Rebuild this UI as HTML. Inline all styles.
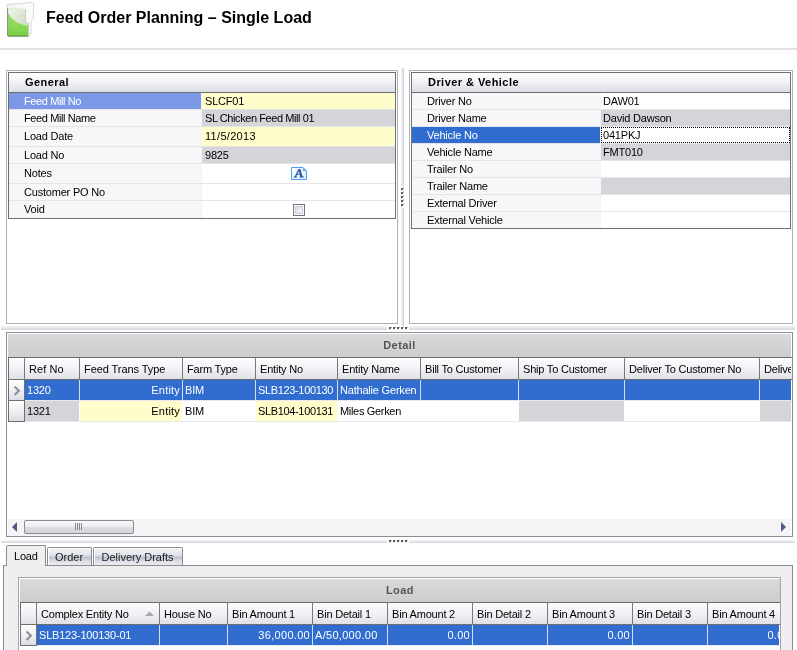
<!DOCTYPE html>
<html><head><meta charset="utf-8"><style>
html,body{margin:0;padding:0}
body{width:797px;height:650px;overflow:hidden;position:relative;background:#fff;font-family:"Liberation Sans",sans-serif;font-size:11px}
body>div{position:absolute}
.t{position:absolute;white-space:nowrap;letter-spacing:-0.2px;will-change:transform}
</style></head><body>
<svg style="position:absolute;left:0px;top:0px" width="40" height="40" viewBox="0 0 40 40">
<defs>
<linearGradient id="pg" x1="0" y1="0" x2="1" y2="0"><stop offset="0" stop-color="#f2f2f2"/><stop offset="1" stop-color="#fcfcfc"/></linearGradient>
<linearGradient id="gg" x1="0" y1="0" x2="0" y2="1"><stop offset="0" stop-color="#a4e070"/><stop offset="0.6" stop-color="#8cd858"/><stop offset="1" stop-color="#7ccc44"/></linearGradient>
<linearGradient id="sg" x1="0" y1="0" x2="1" y2="1"><stop offset="0" stop-color="#eef2ea"/><stop offset="1" stop-color="#cedcc4"/></linearGradient>
</defs>
<path d="M7 4.5 L32 2.5 L33.5 3.5 L33.5 18.5 L31 21 L31 34 L29 36 L8 36 Z" fill="url(#pg)" stroke="#d4d4d4" stroke-width="0.9"/>
<path d="M7.5 8.5 L25.5 9 L26 22.5 L28.5 23.5 L28.5 35.5 L27.5 36.5 L8.5 36.5 L7.5 35.5 Z" fill="url(#gg)"/>
<path d="M8 8.6 L25.5 9 L26 22.5 L28.5 23.5 L28.5 25.5 C20 25 12 21 9 14 L8 14 Z" fill="url(#sg)"/>
<path d="M8 35 L28.5 35 L28 36.5 L8.5 36.5 Z" fill="#5eae2c" opacity="0.8"/>
<path d="M7.6 8.5 L7.6 36" stroke="#8c8c8c" stroke-width="1"/>
<path d="M8 36.6 L28 36.6" stroke="#9a9a9a" stroke-width="0.8"/>
<path d="M25.6 9 L25.8 22.5 L28.6 23.5 L28.6 36" stroke="#c8c8c8" stroke-width="0.6" fill="none"/>
</svg>
<div class="t" style="left:46px;top:8px;height:20px;line-height:20px;text-align:left;font-weight:bold;font-size:16px;letter-spacing:0px;color:#000">Feed Order Planning – Single Load</div>
<div style="left:0px;top:48px;width:797px;height:2px;background:#e2e0e2"></div>
<div style="left:6px;top:70px;width:392px;height:1px;background:#b0afb2"></div>
<div style="left:6px;top:323px;width:392px;height:1px;background:#b0afb2"></div>
<div style="left:6px;top:70px;width:1px;height:254px;background:#b0afb2"></div>
<div style="left:397px;top:70px;width:1px;height:254px;background:#b0afb2"></div>
<div style="left:8px;top:72px;width:388px;height:1px;background:#6e6e70"></div>
<div style="left:8px;top:218px;width:388px;height:1px;background:#6e6e70"></div>
<div style="left:8px;top:72px;width:1px;height:147px;background:#6e6e70"></div>
<div style="left:395px;top:72px;width:1px;height:147px;background:#6e6e70"></div>
<div style="left:9px;top:73px;width:386px;height:19px;background:linear-gradient(#fefeff,#f4f4f8 40%,#dcdce5)"></div>
<div style="left:9px;top:92px;width:386px;height:1px;background:#6e6e70"></div>
<div class="t" style="left:25px;top:73px;height:19px;line-height:19px;text-align:left;font-weight:bold;color:#000;letter-spacing:0.45px">General</div>
<div style="left:9px;top:93px;width:192px;height:16px;background:#7a98e6"></div>
<div class="t" style="left:24px;top:93px;height:16px;line-height:16px;text-align:left;color:#fff;letter-spacing:-0.4px">Feed Mill No</div>
<div style="left:201px;top:93px;width:1px;height:16px;background:#f4f3f6"></div>
<div style="left:202px;top:93px;width:193px;height:16px;background:#fffdc9"></div>
<div class="t" style="left:205px;top:93px;height:16px;line-height:16px;text-align:left;color:#000;">SLCF01</div>
<div style="left:9px;top:109px;width:386px;height:1px;background:#e6e4e9"></div>
<div style="left:9px;top:110px;width:192px;height:16px;background:#f7f6f9"></div>
<div class="t" style="left:24px;top:110px;height:16px;line-height:16px;text-align:left;color:#000;letter-spacing:-0.4px">Feed Mill Name</div>
<div style="left:201px;top:110px;width:1px;height:16px;background:#f4f3f6"></div>
<div style="left:202px;top:110px;width:193px;height:16px;background:#d5d4d8"></div>
<div class="t" style="left:205px;top:110px;height:16px;line-height:16px;text-align:left;color:#000;;letter-spacing:-0.42px">SL Chicken Feed Mill 01</div>
<div style="left:9px;top:126px;width:386px;height:1px;background:#e6e4e9"></div>
<div style="left:9px;top:127px;width:192px;height:19px;background:#f7f6f9"></div>
<div class="t" style="left:24px;top:127px;height:19px;line-height:19px;text-align:left;color:#000">Load Date</div>
<div style="left:201px;top:127px;width:1px;height:19px;background:#f4f3f6"></div>
<div style="left:202px;top:127px;width:193px;height:19px;background:#fffdc9"></div>
<div class="t" style="left:205px;top:127px;height:19px;line-height:19px;text-align:left;color:#000;;letter-spacing:0.3px">11/5/2013</div>
<div style="left:9px;top:146px;width:386px;height:1px;background:#e6e4e9"></div>
<div style="left:9px;top:147px;width:192px;height:16px;background:#f7f6f9"></div>
<div class="t" style="left:24px;top:147px;height:16px;line-height:16px;text-align:left;color:#000">Load No</div>
<div style="left:201px;top:147px;width:1px;height:16px;background:#f4f3f6"></div>
<div style="left:202px;top:147px;width:193px;height:16px;background:#d5d4d8"></div>
<div class="t" style="left:205px;top:147px;height:16px;line-height:16px;text-align:left;color:#000;">9825</div>
<div style="left:9px;top:163px;width:386px;height:1px;background:#e6e4e9"></div>
<div style="left:9px;top:164px;width:192px;height:19px;background:#f7f6f9"></div>
<div class="t" style="left:24px;top:164px;height:19px;line-height:19px;text-align:left;color:#000">Notes</div>
<div style="left:201px;top:164px;width:1px;height:19px;background:#f4f3f6"></div>
<div style="left:202px;top:164px;width:193px;height:19px;background:#ffffff"></div>
<div style="left:9px;top:183px;width:386px;height:1px;background:#e6e4e9"></div>
<div style="left:9px;top:184px;width:192px;height:16px;background:#f7f6f9"></div>
<div class="t" style="left:24px;top:184px;height:16px;line-height:16px;text-align:left;color:#000">Customer PO No</div>
<div style="left:201px;top:184px;width:1px;height:16px;background:#f4f3f6"></div>
<div style="left:202px;top:184px;width:193px;height:16px;background:#ffffff"></div>
<div style="left:9px;top:200px;width:386px;height:1px;background:#e6e4e9"></div>
<div style="left:9px;top:201px;width:192px;height:17px;background:#f7f6f9"></div>
<div class="t" style="left:24px;top:201px;height:17px;line-height:17px;text-align:left;color:#000">Void</div>
<div style="left:201px;top:201px;width:1px;height:17px;background:#f4f3f6"></div>
<div style="left:202px;top:201px;width:193px;height:17px;background:#ffffff"></div>
<svg style="position:absolute;left:291px;top:167px" width="16" height="13" viewBox="0 0 16 13" shape-rendering="geometricPrecision">
<defs><linearGradient id="ai" x1="0" y1="0" x2="1" y2="1"><stop offset="0" stop-color="#ffffff"/><stop offset="1" stop-color="#dfeafa"/></linearGradient></defs>
<path d="M0.5 0.5 H12 L15.5 4 V12.5 H0.5 Z" fill="url(#ai)" stroke="#4f9ef5" stroke-width="1"/>
<path d="M12 0.5 L15.5 4 H12 Z" fill="#58a4f6"/>
<path d="M7.6 2 H9.4 L11.6 10 H9.2 Z" fill="#1f50a2"/>
<path d="M7.9 2.6 L4.2 10" stroke="#2a5aaa" stroke-width="1.3"/>
<path d="M5.6 7.3 H10.2" stroke="#3a66b0" stroke-width="1"/>
<path d="M2.6 9.6 H6 V10.6 H2.6 Z M8.8 9.6 H12.8 V10.6 H8.8 Z" fill="#1f50a2"/>
</svg>
<div style="left:293px;top:204px;width:12px;height:1px;background:#747474"></div>
<div style="left:293px;top:215px;width:12px;height:1px;background:#747474"></div>
<div style="left:293px;top:204px;width:1px;height:12px;background:#747474"></div>
<div style="left:304px;top:204px;width:1px;height:12px;background:#747474"></div>
<div style="left:294px;top:205px;width:10px;height:10px;background:#fff"></div>
<div style="left:295px;top:206px;width:8px;height:8px;border:1px solid #c4cade;box-sizing:border-box;background:linear-gradient(135deg,#dcdeea,#f8f6fa)"></div>
<div style="left:409px;top:70px;width:384px;height:1px;background:#b0afb2"></div>
<div style="left:409px;top:323px;width:384px;height:1px;background:#b0afb2"></div>
<div style="left:409px;top:70px;width:1px;height:254px;background:#b0afb2"></div>
<div style="left:792px;top:70px;width:1px;height:254px;background:#b0afb2"></div>
<div style="left:411px;top:72px;width:380px;height:1px;background:#6e6e70"></div>
<div style="left:411px;top:228px;width:380px;height:1px;background:#6e6e70"></div>
<div style="left:411px;top:72px;width:1px;height:157px;background:#6e6e70"></div>
<div style="left:790px;top:72px;width:1px;height:157px;background:#6e6e70"></div>
<div style="left:412px;top:73px;width:378px;height:19px;background:linear-gradient(#fefeff,#f4f4f8 40%,#dcdce5)"></div>
<div style="left:412px;top:92px;width:378px;height:1px;background:#6e6e70"></div>
<div class="t" style="left:428px;top:73px;height:19px;line-height:19px;text-align:left;font-weight:bold;color:#000;letter-spacing:0.45px">Driver & Vehicle</div>
<div style="left:412px;top:93px;width:188px;height:16px;background:#f7f6f9"></div>
<div class="t" style="left:427px;top:93px;height:16px;line-height:16px;text-align:left;color:#000">Driver No</div>
<div style="left:600px;top:93px;width:1px;height:16px;background:#f4f3f6"></div>
<div style="left:601px;top:93px;width:189px;height:16px;background:#ffffff"></div>
<div class="t" style="left:603px;top:93px;height:16px;line-height:16px;text-align:left;color:#000;">DAW01</div>
<div style="left:412px;top:109px;width:378px;height:1px;background:#e6e4e9"></div>
<div style="left:412px;top:110px;width:188px;height:16px;background:#f7f6f9"></div>
<div class="t" style="left:427px;top:110px;height:16px;line-height:16px;text-align:left;color:#000">Driver Name</div>
<div style="left:600px;top:110px;width:1px;height:16px;background:#f4f3f6"></div>
<div style="left:601px;top:110px;width:189px;height:16px;background:#d5d4d8"></div>
<div class="t" style="left:603px;top:110px;height:16px;line-height:16px;text-align:left;color:#000;">David Dawson</div>
<div style="left:412px;top:126px;width:378px;height:1px;background:#e6e4e9"></div>
<div style="left:412px;top:127px;width:188px;height:16px;background:#316dcf"></div>
<div class="t" style="left:427px;top:127px;height:16px;line-height:16px;text-align:left;color:#fff">Vehicle No</div>
<div style="left:600px;top:127px;width:1px;height:16px;background:#f4f3f6"></div>
<div style="left:601px;top:127px;width:189px;height:16px;background:#ffffff"></div>
<div class="t" style="left:603px;top:127px;height:16px;line-height:16px;text-align:left;color:#000;">041PKJ</div>
<div style="left:412px;top:143px;width:378px;height:1px;background:#e6e4e9"></div>
<div style="left:412px;top:144px;width:188px;height:16px;background:#f7f6f9"></div>
<div class="t" style="left:427px;top:144px;height:16px;line-height:16px;text-align:left;color:#000">Vehicle Name</div>
<div style="left:600px;top:144px;width:1px;height:16px;background:#f4f3f6"></div>
<div style="left:601px;top:144px;width:189px;height:16px;background:#d5d4d8"></div>
<div class="t" style="left:603px;top:144px;height:16px;line-height:16px;text-align:left;color:#000;">FMT010</div>
<div style="left:412px;top:160px;width:378px;height:1px;background:#e6e4e9"></div>
<div style="left:412px;top:161px;width:188px;height:16px;background:#f7f6f9"></div>
<div class="t" style="left:427px;top:161px;height:16px;line-height:16px;text-align:left;color:#000">Trailer No</div>
<div style="left:600px;top:161px;width:1px;height:16px;background:#f4f3f6"></div>
<div style="left:601px;top:161px;width:189px;height:16px;background:#ffffff"></div>
<div style="left:412px;top:177px;width:378px;height:1px;background:#e6e4e9"></div>
<div style="left:412px;top:178px;width:188px;height:16px;background:#f7f6f9"></div>
<div class="t" style="left:427px;top:178px;height:16px;line-height:16px;text-align:left;color:#000">Trailer Name</div>
<div style="left:600px;top:178px;width:1px;height:16px;background:#f4f3f6"></div>
<div style="left:601px;top:178px;width:189px;height:16px;background:#d5d4d8"></div>
<div style="left:412px;top:194px;width:378px;height:1px;background:#e6e4e9"></div>
<div style="left:412px;top:195px;width:188px;height:16px;background:#f7f6f9"></div>
<div class="t" style="left:427px;top:195px;height:16px;line-height:16px;text-align:left;color:#000">External Driver</div>
<div style="left:600px;top:195px;width:1px;height:16px;background:#f4f3f6"></div>
<div style="left:601px;top:195px;width:189px;height:16px;background:#ffffff"></div>
<div style="left:412px;top:211px;width:378px;height:1px;background:#e6e4e9"></div>
<div style="left:412px;top:212px;width:188px;height:16px;background:#f7f6f9"></div>
<div class="t" style="left:427px;top:212px;height:16px;line-height:16px;text-align:left;color:#000">External Vehicle</div>
<div style="left:600px;top:212px;width:1px;height:16px;background:#f4f3f6"></div>
<div style="left:601px;top:212px;width:189px;height:16px;background:#ffffff"></div>
<div style="left:601px;top:127px;width:189px;height:16px;border:1px dotted #000;box-sizing:border-box"></div>
<div style="left:401px;top:68px;width:3px;height:258px;background:linear-gradient(90deg,#f2f2f6,#e2e2ea 50%,#d2d2dc)"></div>
<div style="left:400px;top:186px;width:5px;height:22px;background:#fff"></div>
<div style="left:401px;top:188px;width:2px;height:2px;background:#5c5c5e"></div>
<div style="left:403px;top:187px;width:1px;height:2px;background:#b4b4b8"></div>
<div style="left:401px;top:190px;width:1px;height:1px;background:#c4c4c8"></div>
<div style="left:401px;top:192px;width:2px;height:2px;background:#5c5c5e"></div>
<div style="left:403px;top:191px;width:1px;height:2px;background:#b4b4b8"></div>
<div style="left:401px;top:194px;width:1px;height:1px;background:#c4c4c8"></div>
<div style="left:401px;top:196px;width:2px;height:2px;background:#5c5c5e"></div>
<div style="left:403px;top:195px;width:1px;height:2px;background:#b4b4b8"></div>
<div style="left:401px;top:198px;width:1px;height:1px;background:#c4c4c8"></div>
<div style="left:401px;top:200px;width:2px;height:2px;background:#5c5c5e"></div>
<div style="left:403px;top:199px;width:1px;height:2px;background:#b4b4b8"></div>
<div style="left:401px;top:202px;width:1px;height:1px;background:#c4c4c8"></div>
<div style="left:401px;top:204px;width:2px;height:2px;background:#5c5c5e"></div>
<div style="left:403px;top:203px;width:1px;height:2px;background:#b4b4b8"></div>
<div style="left:401px;top:206px;width:1px;height:1px;background:#c4c4c8"></div>
<div style="left:1px;top:326px;width:794px;height:4px;background:linear-gradient(#f6f6f9,#e6e6ec 50%,#d2d2da)"></div>
<div style="left:387px;top:326px;width:22px;height:4px;background:#fff"></div>
<div style="left:389px;top:327px;width:2px;height:2px;background:#5c5c5e"></div>
<div style="left:391px;top:327px;width:1px;height:1px;background:#b0b0b4"></div>
<div style="left:389px;top:329px;width:1px;height:1px;background:#c4c4c8"></div>
<div style="left:393px;top:327px;width:2px;height:2px;background:#5c5c5e"></div>
<div style="left:395px;top:327px;width:1px;height:1px;background:#b0b0b4"></div>
<div style="left:393px;top:329px;width:1px;height:1px;background:#c4c4c8"></div>
<div style="left:397px;top:327px;width:2px;height:2px;background:#5c5c5e"></div>
<div style="left:399px;top:327px;width:1px;height:1px;background:#b0b0b4"></div>
<div style="left:397px;top:329px;width:1px;height:1px;background:#c4c4c8"></div>
<div style="left:401px;top:327px;width:2px;height:2px;background:#5c5c5e"></div>
<div style="left:403px;top:327px;width:1px;height:1px;background:#b0b0b4"></div>
<div style="left:401px;top:329px;width:1px;height:1px;background:#c4c4c8"></div>
<div style="left:405px;top:327px;width:2px;height:2px;background:#5c5c5e"></div>
<div style="left:407px;top:327px;width:1px;height:1px;background:#b0b0b4"></div>
<div style="left:405px;top:329px;width:1px;height:1px;background:#c4c4c8"></div>
<div style="left:1px;top:540px;width:794px;height:3px;background:linear-gradient(#f6f6f9,#e6e6ec 50%,#d2d2da)"></div>
<div style="left:387px;top:540px;width:22px;height:3px;background:#fff"></div>
<div style="left:389px;top:540px;width:2px;height:2px;background:#5c5c5e"></div>
<div style="left:391px;top:540px;width:1px;height:1px;background:#b0b0b4"></div>
<div style="left:389px;top:542px;width:1px;height:1px;background:#c4c4c8"></div>
<div style="left:393px;top:540px;width:2px;height:2px;background:#5c5c5e"></div>
<div style="left:395px;top:540px;width:1px;height:1px;background:#b0b0b4"></div>
<div style="left:393px;top:542px;width:1px;height:1px;background:#c4c4c8"></div>
<div style="left:397px;top:540px;width:2px;height:2px;background:#5c5c5e"></div>
<div style="left:399px;top:540px;width:1px;height:1px;background:#b0b0b4"></div>
<div style="left:397px;top:542px;width:1px;height:1px;background:#c4c4c8"></div>
<div style="left:401px;top:540px;width:2px;height:2px;background:#5c5c5e"></div>
<div style="left:403px;top:540px;width:1px;height:1px;background:#b0b0b4"></div>
<div style="left:401px;top:542px;width:1px;height:1px;background:#c4c4c8"></div>
<div style="left:405px;top:540px;width:2px;height:2px;background:#5c5c5e"></div>
<div style="left:407px;top:540px;width:1px;height:1px;background:#b0b0b4"></div>
<div style="left:405px;top:542px;width:1px;height:1px;background:#c4c4c8"></div>
<div style="left:6px;top:332px;width:787px;height:205px;border:1px solid #8e8e90;box-sizing:border-box;background:#fff"></div>
<div style="left:8px;top:334px;width:783px;height:23px;background:linear-gradient(#dad9db,#d3d2d4 50%,#cdccce)"></div>
<div class="t" style="left:8px;top:334px;height:23px;line-height:23px;width:783px;text-align:center;font-weight:bold;color:#555;letter-spacing:0.45px">Detail</div>
<div style="left:8px;top:357px;width:784px;height:23px;background:linear-gradient(#fdfdff,#f2f2f6 50%,#dedee6)"></div>
<div style="left:8px;top:357px;width:784px;height:1px;background:#6e6e70"></div>
<div style="left:8px;top:379px;width:784px;height:1px;background:#6e6e70"></div>
<div style="left:8px;top:357px;width:1px;height:23px;background:#6e6e70"></div>
<div style="left:24px;top:357px;width:1px;height:23px;background:#78787c"></div>
<div style="left:24px;top:357px;width:1px;height:23px;background:#78787c"></div>
<div style="left:79px;top:357px;width:1px;height:23px;background:#78787c"></div>
<div style="left:182px;top:357px;width:1px;height:23px;background:#78787c"></div>
<div style="left:255px;top:357px;width:1px;height:23px;background:#78787c"></div>
<div style="left:337px;top:357px;width:1px;height:23px;background:#78787c"></div>
<div style="left:420px;top:357px;width:1px;height:23px;background:#78787c"></div>
<div style="left:518px;top:357px;width:1px;height:23px;background:#78787c"></div>
<div style="left:624px;top:357px;width:1px;height:23px;background:#78787c"></div>
<div style="left:759px;top:357px;width:1px;height:23px;background:#78787c"></div>
<div class="t" style="left:29px;top:359px;height:21px;line-height:21px;width:50px;text-align:left;color:#000;overflow:hidden;letter-spacing:0.1px">Ref No</div>
<div class="t" style="left:84px;top:359px;height:21px;line-height:21px;width:98px;text-align:left;color:#000;overflow:hidden;letter-spacing:-0.07px">Feed Trans Type</div>
<div class="t" style="left:187px;top:359px;height:21px;line-height:21px;width:68px;text-align:left;color:#000;overflow:hidden">Farm Type</div>
<div class="t" style="left:260px;top:359px;height:21px;line-height:21px;width:77px;text-align:left;color:#000;overflow:hidden">Entity No</div>
<div class="t" style="left:342px;top:359px;height:21px;line-height:21px;width:78px;text-align:left;color:#000;overflow:hidden">Entity Name</div>
<div class="t" style="left:425px;top:359px;height:21px;line-height:21px;width:93px;text-align:left;color:#000;overflow:hidden">Bill To Customer</div>
<div class="t" style="left:523px;top:359px;height:21px;line-height:21px;width:101px;text-align:left;color:#000;overflow:hidden">Ship To Customer</div>
<div class="t" style="left:629px;top:359px;height:21px;line-height:21px;width:130px;text-align:left;color:#000;overflow:hidden">Deliver To Customer No</div>
<div class="t" style="left:764px;top:359px;height:21px;line-height:21px;width:27px;text-align:left;color:#000;overflow:hidden">Delivery Date</div>
<div style="left:8px;top:380px;width:17px;height:20px;background:linear-gradient(#ffffff,#f0f0f4 50%,#dcdce4)"></div>
<div style="left:8px;top:380px;width:1px;height:21px;background:#6e6e70"></div>
<div style="left:24px;top:380px;width:1px;height:21px;background:#6e6e70"></div>
<div style="left:8px;top:400px;width:17px;height:1px;background:#6e6e70"></div>
<svg style="position:absolute;left:13px;top:385px" width="9" height="12" viewBox="0 0 9 12"><path d="M1.6 1.6 L5.9 5.8 L1.6 10" fill="none" stroke="#8a9098" stroke-width="2.1"/></svg>
<div style="left:25px;top:380px;width:54px;height:20px;background:#316dcf"></div>
<div style="left:79px;top:380px;width:1px;height:20px;background:#d4def2"></div>
<div class="t" style="left:27px;top:380px;height:20px;line-height:20px;width:50px;text-align:left;color:#fff;overflow:hidden;white-space:nowrap">1320</div>
<div style="left:80px;top:380px;width:102px;height:20px;background:#316dcf"></div>
<div style="left:182px;top:380px;width:1px;height:20px;background:#d4def2"></div>
<div class="t" style="left:80px;top:380px;height:20px;line-height:20px;width:100px;text-align:right;color:#fff;overflow:hidden;white-space:nowrap;letter-spacing:0.2px">Entity</div>
<div style="left:183px;top:380px;width:72px;height:20px;background:#316dcf"></div>
<div style="left:255px;top:380px;width:1px;height:20px;background:#d4def2"></div>
<div class="t" style="left:185px;top:380px;height:20px;line-height:20px;width:68px;text-align:left;color:#fff;overflow:hidden;white-space:nowrap">BIM</div>
<div style="left:256px;top:380px;width:81px;height:20px;background:#316dcf"></div>
<div style="left:337px;top:380px;width:1px;height:20px;background:#d4def2"></div>
<div class="t" style="left:258px;top:380px;height:20px;line-height:20px;width:77px;text-align:left;color:#fff;overflow:hidden;white-space:nowrap;letter-spacing:-0.35px">SLB123-100130</div>
<div style="left:338px;top:380px;width:82px;height:20px;background:#316dcf"></div>
<div style="left:420px;top:380px;width:1px;height:20px;background:#d4def2"></div>
<div class="t" style="left:340px;top:380px;height:20px;line-height:20px;width:78px;text-align:left;color:#fff;overflow:hidden;white-space:nowrap">Nathalie Gerken</div>
<div style="left:421px;top:380px;width:97px;height:20px;background:#316dcf"></div>
<div style="left:518px;top:380px;width:1px;height:20px;background:#d4def2"></div>
<div style="left:519px;top:380px;width:105px;height:20px;background:#316dcf"></div>
<div style="left:624px;top:380px;width:1px;height:20px;background:#d4def2"></div>
<div style="left:625px;top:380px;width:134px;height:20px;background:#316dcf"></div>
<div style="left:759px;top:380px;width:1px;height:20px;background:#d4def2"></div>
<div style="left:760px;top:380px;width:31px;height:20px;background:#316dcf"></div>
<div style="left:25px;top:400px;width:767px;height:1px;background:#e8e8ec"></div>
<div style="left:8px;top:401px;width:17px;height:20px;background:linear-gradient(#ffffff,#f0f0f4 50%,#dcdce4)"></div>
<div style="left:8px;top:401px;width:1px;height:21px;background:#6e6e70"></div>
<div style="left:24px;top:401px;width:1px;height:21px;background:#6e6e70"></div>
<div style="left:8px;top:421px;width:17px;height:1px;background:#6e6e70"></div>
<div style="left:25px;top:401px;width:54px;height:20px;background:#d5d4d8"></div>
<div style="left:79px;top:401px;width:1px;height:20px;background:#ffffff"></div>
<div class="t" style="left:27px;top:401px;height:20px;line-height:20px;width:50px;text-align:left;color:#000;overflow:hidden;white-space:nowrap">1321</div>
<div style="left:80px;top:401px;width:102px;height:20px;background:#fffdc9"></div>
<div style="left:182px;top:401px;width:1px;height:20px;background:#ffffff"></div>
<div class="t" style="left:80px;top:401px;height:20px;line-height:20px;width:100px;text-align:right;color:#000;overflow:hidden;white-space:nowrap;letter-spacing:0.2px">Entity</div>
<div style="left:183px;top:401px;width:72px;height:20px;background:#ffffff"></div>
<div style="left:255px;top:401px;width:1px;height:20px;background:#ffffff"></div>
<div class="t" style="left:185px;top:401px;height:20px;line-height:20px;width:68px;text-align:left;color:#000;overflow:hidden;white-space:nowrap">BIM</div>
<div style="left:256px;top:401px;width:81px;height:20px;background:#fffdc9"></div>
<div style="left:337px;top:401px;width:1px;height:20px;background:#ffffff"></div>
<div class="t" style="left:258px;top:401px;height:20px;line-height:20px;width:77px;text-align:left;color:#000;overflow:hidden;white-space:nowrap;letter-spacing:-0.35px">SLB104-100131</div>
<div style="left:338px;top:401px;width:82px;height:20px;background:#ffffff"></div>
<div style="left:420px;top:401px;width:1px;height:20px;background:#ffffff"></div>
<div class="t" style="left:340px;top:401px;height:20px;line-height:20px;width:78px;text-align:left;color:#000;overflow:hidden;white-space:nowrap;letter-spacing:-0.32px">Miles Gerken</div>
<div style="left:421px;top:401px;width:97px;height:20px;background:#ffffff"></div>
<div style="left:518px;top:401px;width:1px;height:20px;background:#ffffff"></div>
<div style="left:519px;top:401px;width:105px;height:20px;background:#d5d4d8"></div>
<div style="left:624px;top:401px;width:1px;height:20px;background:#ffffff"></div>
<div style="left:625px;top:401px;width:134px;height:20px;background:#ffffff"></div>
<div style="left:759px;top:401px;width:1px;height:20px;background:#ffffff"></div>
<div style="left:760px;top:401px;width:31px;height:20px;background:#d5d4d8"></div>
<div style="left:25px;top:421px;width:767px;height:1px;background:#e8e8ec"></div>
<div style="left:8px;top:519px;width:783px;height:17px;background:#f4f3f5"></div>
<svg style="position:absolute;left:12px;top:521.5px" width="6" height="10" viewBox="0 0 6 10"><path d="M5 0 L0 5 L5 10 Z" fill="#4d5b86"/></svg>
<svg style="position:absolute;left:781px;top:521.5px" width="6" height="10" viewBox="0 0 6 10"><path d="M0 0 L5 5 L0 10 Z" fill="#4d5b86"/></svg>
<div style="left:24px;top:520px;width:110px;height:14px;border:1px solid #8c8c90;border-radius:2px;box-sizing:border-box;background:linear-gradient(#fafafc,#eeeef2 45%,#dcdce0 55%,#d6d6da)"></div>
<div style="left:75px;top:523px;width:1px;height:7px;background:#85858a"></div>
<div style="left:77px;top:523px;width:1px;height:7px;background:#85858a"></div>
<div style="left:79px;top:523px;width:1px;height:7px;background:#85858a"></div>
<div style="left:81px;top:523px;width:1px;height:7px;background:#85858a"></div>
<div style="left:3px;top:565px;width:790px;height:96px;border:1px solid #8c8c8e;box-sizing:border-box;background:#f0eef0"></div>
<div style="left:6px;top:545px;width:40px;height:21px;border:1px solid #8c8c8e;border-bottom:none;border-radius:2px 2px 0 0;box-sizing:border-box;background:#f0eef0"></div>
<div class="t" style="left:14px;top:547px;height:18px;line-height:18px;text-align:left;color:#000">Load</div>
<div style="left:47px;top:547px;width:45px;height:18px;border:1px solid #8c8c8e;border-bottom:none;border-radius:2px 2px 0 0;box-sizing:border-box;box-shadow:inset 1px 1px 0 #fff;background:linear-gradient(#f2f2f6,#e4e5ec 40%,#bcc2ce 57%,#dcdfe7 78%,#eaecf2)"></div>
<div class="t" style="left:47px;top:549px;height:17px;line-height:17px;width:44px;text-align:center;color:#222;letter-spacing:0">Order</div>
<div style="left:93px;top:547px;width:90px;height:18px;border:1px solid #8c8c8e;border-bottom:none;border-radius:2px 2px 0 0;box-sizing:border-box;box-shadow:inset 1px 1px 0 #fff;background:linear-gradient(#f2f2f6,#e4e5ec 40%,#bcc2ce 57%,#dcdfe7 78%,#eaecf2)"></div>
<div class="t" style="left:93px;top:549px;height:17px;line-height:17px;width:89px;text-align:center;color:#222;letter-spacing:0">Delivery Drafts</div>
<div style="left:18px;top:577px;width:763px;height:84px;border:1px solid #a4a4a6;box-sizing:border-box;background:#ffffff"></div>
<div style="left:20px;top:579px;width:760px;height:23px;background:linear-gradient(#dad9db,#d3d2d4 50%,#cdccce)"></div>
<div class="t" style="left:20px;top:579px;height:23px;line-height:23px;width:760px;text-align:center;font-weight:bold;color:#555;letter-spacing:0.45px">Load</div>
<div style="left:20px;top:602px;width:760px;height:23px;background:linear-gradient(#fdfdff,#f2f2f6 50%,#dedee6)"></div>
<div style="left:20px;top:602px;width:760px;height:1px;background:#6e6e70"></div>
<div style="left:20px;top:624px;width:760px;height:1px;background:#6e6e70"></div>
<div style="left:20px;top:602px;width:1px;height:23px;background:#6e6e70"></div>
<div style="left:36px;top:602px;width:1px;height:23px;background:#78787c"></div>
<div style="left:36px;top:602px;width:1px;height:23px;background:#78787c"></div>
<div style="left:159px;top:602px;width:1px;height:23px;background:#78787c"></div>
<div style="left:227px;top:602px;width:1px;height:23px;background:#78787c"></div>
<div style="left:312px;top:602px;width:1px;height:23px;background:#78787c"></div>
<div style="left:387px;top:602px;width:1px;height:23px;background:#78787c"></div>
<div style="left:472px;top:602px;width:1px;height:23px;background:#78787c"></div>
<div style="left:547px;top:602px;width:1px;height:23px;background:#78787c"></div>
<div style="left:632px;top:602px;width:1px;height:23px;background:#78787c"></div>
<div style="left:707px;top:602px;width:1px;height:23px;background:#78787c"></div>
<div class="t" style="left:41px;top:604px;height:21px;line-height:21px;width:118px;text-align:left;color:#000;overflow:hidden">Complex Entity No</div>
<div class="t" style="left:164px;top:604px;height:21px;line-height:21px;width:63px;text-align:left;color:#000;overflow:hidden">House No</div>
<div class="t" style="left:232px;top:604px;height:21px;line-height:21px;width:80px;text-align:left;color:#000;overflow:hidden">Bin Amount 1</div>
<div class="t" style="left:317px;top:604px;height:21px;line-height:21px;width:70px;text-align:left;color:#000;overflow:hidden">Bin Detail 1</div>
<div class="t" style="left:392px;top:604px;height:21px;line-height:21px;width:80px;text-align:left;color:#000;overflow:hidden">Bin Amount 2</div>
<div class="t" style="left:477px;top:604px;height:21px;line-height:21px;width:70px;text-align:left;color:#000;overflow:hidden">Bin Detail 2</div>
<div class="t" style="left:552px;top:604px;height:21px;line-height:21px;width:80px;text-align:left;color:#000;overflow:hidden">Bin Amount 3</div>
<div class="t" style="left:637px;top:604px;height:21px;line-height:21px;width:70px;text-align:left;color:#000;overflow:hidden">Bin Detail 3</div>
<div class="t" style="left:712px;top:604px;height:21px;line-height:21px;width:67px;text-align:left;color:#000;overflow:hidden">Bin Amount 4</div>
<div style="left:20px;top:625px;width:17px;height:20px;background:linear-gradient(#ffffff,#f0f0f4 50%,#dcdce4)"></div>
<div style="left:20px;top:625px;width:1px;height:21px;background:#6e6e70"></div>
<div style="left:36px;top:625px;width:1px;height:21px;background:#6e6e70"></div>
<div style="left:20px;top:645px;width:17px;height:1px;background:#6e6e70"></div>
<svg style="position:absolute;left:25px;top:630px" width="9" height="12" viewBox="0 0 9 12"><path d="M1.6 1.6 L5.9 5.8 L1.6 10" fill="none" stroke="#8a9098" stroke-width="2.1"/></svg>
<div style="left:37px;top:625px;width:122px;height:20px;background:#316dcf"></div>
<div style="left:159px;top:625px;width:1px;height:20px;background:#d4def2"></div>
<div class="t" style="left:39px;top:625px;height:20px;line-height:20px;width:118px;text-align:left;color:#fff;overflow:hidden;white-space:nowrap">SLB123-100130-01</div>
<div style="left:160px;top:625px;width:67px;height:20px;background:#316dcf"></div>
<div style="left:227px;top:625px;width:1px;height:20px;background:#d4def2"></div>
<div style="left:228px;top:625px;width:84px;height:20px;background:#316dcf"></div>
<div style="left:312px;top:625px;width:1px;height:20px;background:#d4def2"></div>
<div class="t" style="left:228px;top:625px;height:20px;line-height:20px;width:82px;text-align:right;color:#fff;overflow:hidden;white-space:nowrap;letter-spacing:0.3px">36,000.00</div>
<div style="left:313px;top:625px;width:74px;height:20px;background:#316dcf"></div>
<div style="left:387px;top:625px;width:1px;height:20px;background:#d4def2"></div>
<div class="t" style="left:315px;top:625px;height:20px;line-height:20px;width:70px;text-align:left;color:#fff;overflow:hidden;white-space:nowrap;letter-spacing:0.3px">A/50,000.00</div>
<div style="left:388px;top:625px;width:84px;height:20px;background:#316dcf"></div>
<div style="left:472px;top:625px;width:1px;height:20px;background:#d4def2"></div>
<div class="t" style="left:388px;top:625px;height:20px;line-height:20px;width:82px;text-align:right;color:#fff;overflow:hidden;white-space:nowrap;letter-spacing:0.3px">0.00</div>
<div style="left:473px;top:625px;width:74px;height:20px;background:#316dcf"></div>
<div style="left:547px;top:625px;width:1px;height:20px;background:#d4def2"></div>
<div style="left:548px;top:625px;width:84px;height:20px;background:#316dcf"></div>
<div style="left:632px;top:625px;width:1px;height:20px;background:#d4def2"></div>
<div class="t" style="left:548px;top:625px;height:20px;line-height:20px;width:82px;text-align:right;color:#fff;overflow:hidden;white-space:nowrap;letter-spacing:0.3px">0.00</div>
<div style="left:633px;top:625px;width:74px;height:20px;background:#316dcf"></div>
<div style="left:707px;top:625px;width:1px;height:20px;background:#d4def2"></div>
<div style="left:708px;top:625px;width:71px;height:20px;background:#316dcf"></div>
<div style="left:708px;top:625px;width:71px;height:20px;overflow:hidden"><div class="t" style="left:0;top:0;width:82px;height:20px;line-height:20px;text-align:right;color:#fff;letter-spacing:0.3px">0.00</div></div>
<div style="left:37px;top:645px;width:743px;height:1px;background:#e8e8ec"></div>
<svg style="position:absolute;left:145px;top:611px" width="10" height="6" viewBox="0 0 10 6"><path d="M0 5 L4.5 0.5 L9 5 Z" fill="#a8a8b0"/></svg>
</body></html>
